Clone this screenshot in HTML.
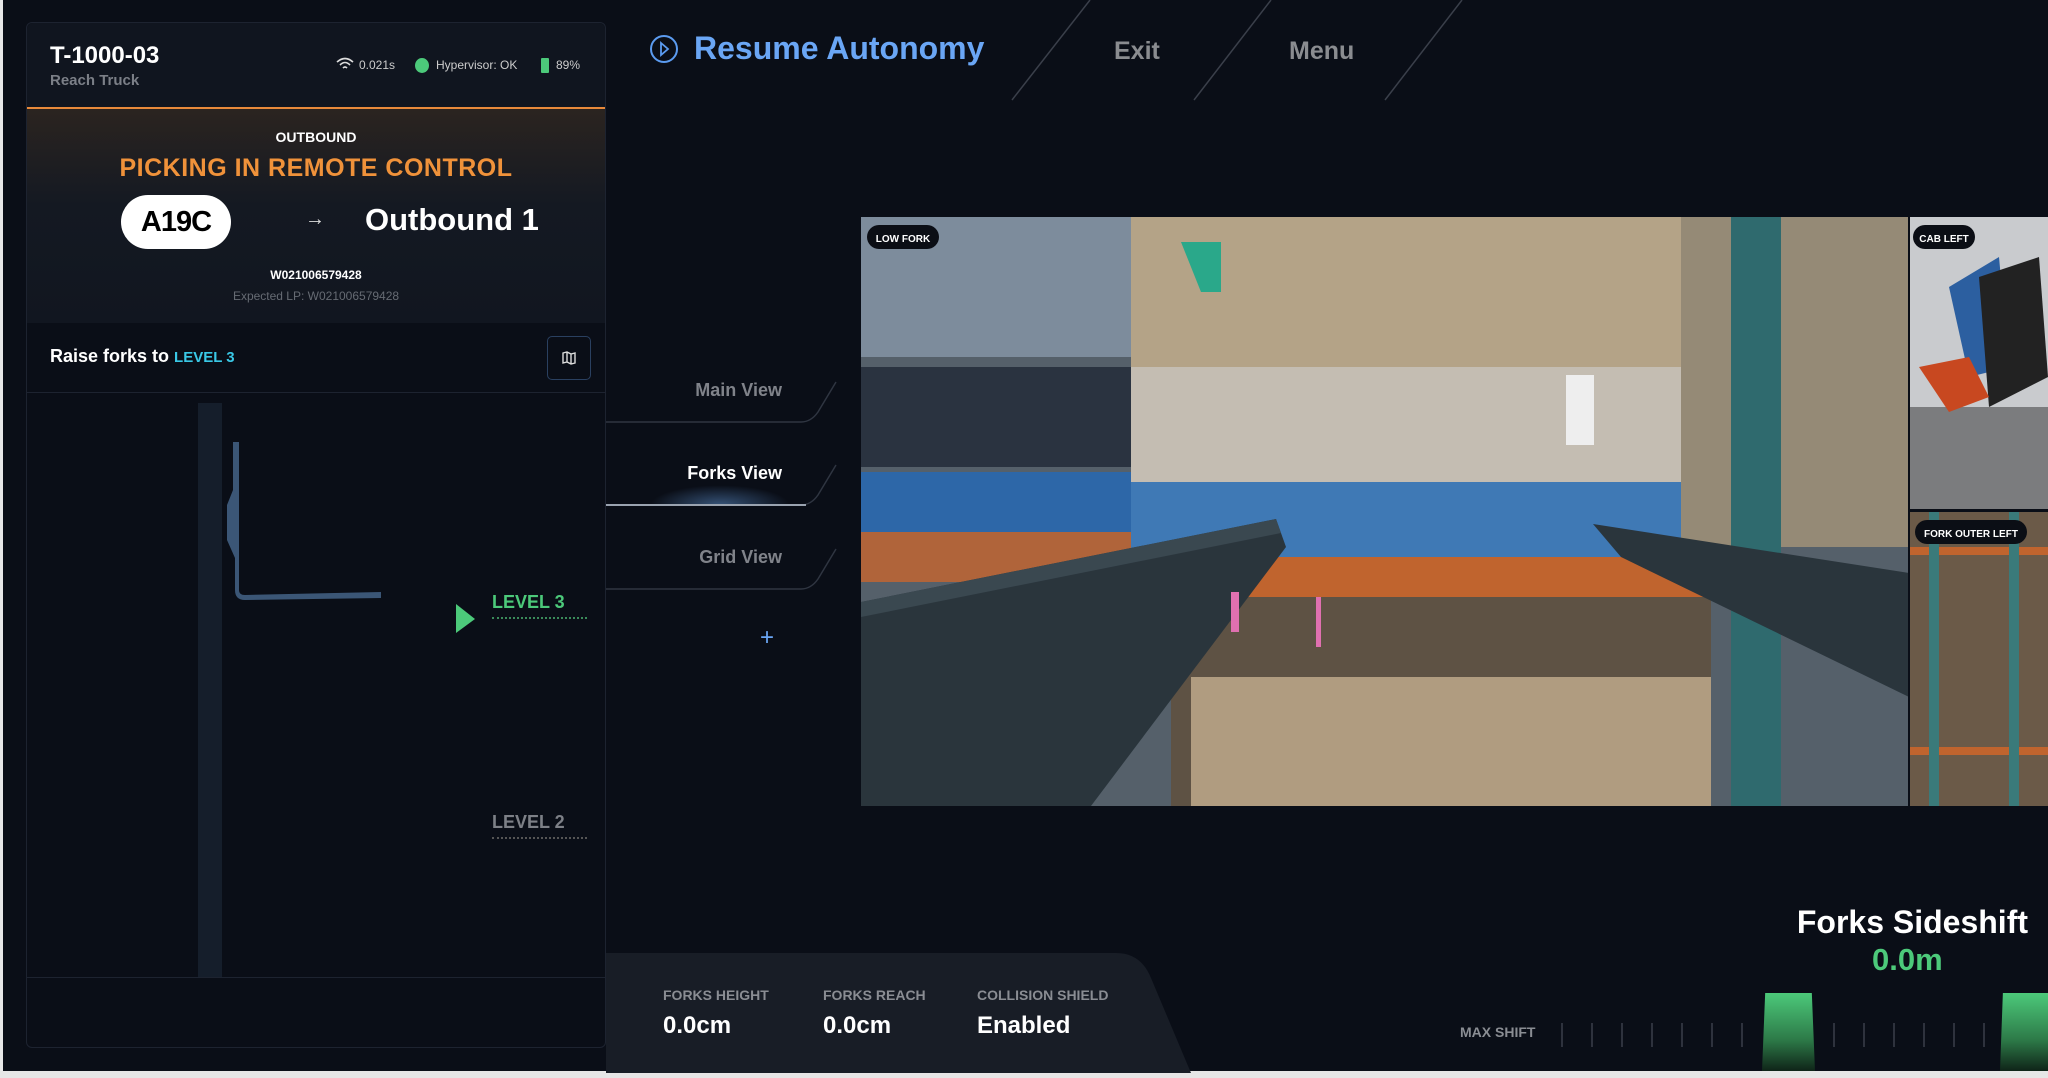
<!DOCTYPE html>
<html><head><meta charset="utf-8"><style>
*{margin:0;padding:0;box-sizing:border-box}
body{width:2048px;height:1078px;background:#0a0e17;font-family:"Liberation Sans",sans-serif;color:#fff;position:relative;overflow:hidden}
.a{position:absolute;white-space:nowrap}
.b{font-weight:bold}
</style></head><body>
<div class="a" style="left:0;top:0;width:3px;height:1078px;background:#e8e8e8"></div>
<div class="a" style="left:0;top:1071px;width:2048px;height:7px;background:#e6e6e6"></div>

<!-- left panel -->
<div class="a" style="left:26px;top:22px;width:580px;height:1026px;border:1px solid #1d2330;border-radius:6px;background:#0a0e17"></div>
<div class="a" style="left:27px;top:23px;width:578px;height:84px;background:#10151f;border-radius:6px 6px 0 0"></div>
<div class="a" style="left:27px;top:107px;width:578px;height:2px;background:#e8893a"></div>
<div class="a" style="left:27px;top:109px;width:578px;height:214px;background:linear-gradient(#2b2420,#141922 45%,#111620)"></div>
<div class="a b" style="left:50px;top:42px;font-size:24px">T-1000-03</div>
<div class="a b" style="left:50px;top:72px;font-size:15px;color:#7b7f87">Reach Truck</div>
<svg class="a" style="left:336px;top:57px" width="18" height="14" viewBox="0 0 18 14"><path d="M1 5Q9-2 17 5M4 8Q9 3 14 8M7 11Q9 9 11 11" stroke="#ddd" stroke-width="1.6" fill="none"/></svg>
<div class="a" style="left:359px;top:58px;font-size:12px;color:#ccc">0.021s</div>
<div class="a" style="left:415px;top:58px;width:14px;height:15px;border-radius:50%;background:#4cc97a"></div>
<div class="a" style="left:436px;top:58px;font-size:12px;color:#ccc">Hypervisor: OK</div>
<div class="a" style="left:541px;top:58px;width:8px;height:15px;background:#4cc97a;border-radius:1px"></div>
<div class="a" style="left:556px;top:58px;font-size:12px;color:#ccc">89%</div>

<div class="a b" style="left:27px;width:578px;top:129px;text-align:center;font-size:14px">OUTBOUND</div>
<div class="a b" style="left:27px;width:578px;top:154px;text-align:center;font-size:25px;letter-spacing:0.5px;color:#f0923a">PICKING IN REMOTE CONTROL</div>
<div class="a b" style="left:121px;top:195px;width:110px;height:54px;border-radius:27px;background:#fff;color:#000;font-size:29px;text-align:center;line-height:54px;letter-spacing:-1px">A19C</div>
<div class="a" style="left:305px;top:208px;font-size:20px;color:#ddd">→</div>
<div class="a b" style="left:365px;top:202px;font-size:31px">Outbound 1</div>
<div class="a b" style="left:27px;width:578px;top:268px;text-align:center;font-size:12px">W021006579428</div>
<div class="a" style="left:27px;width:578px;top:289px;text-align:center;font-size:12px;color:#666b73">Expected LP: W021006579428</div>

<div class="a b" style="left:50px;top:346px;font-size:18px">Raise forks to <span style="color:#39c8e6;font-size:15px">LEVEL 3</span></div>
<div class="a" style="left:547px;top:336px;width:44px;height:44px;border:1.5px solid #2a4060;border-radius:5px"></div>
<svg class="a" style="left:561px;top:350px" width="16" height="16" viewBox="0 0 16 16"><path d="M2 3L6 2L10 4L14 3V13L10 14L6 12L2 13Z M6 2V12 M10 4V14" stroke="#ddd" stroke-width="1.4" fill="none"/></svg>
<div class="a" style="left:27px;top:392px;width:578px;height:1px;background:#1d2330"></div>

<!-- chart -->
<div class="a" style="left:198px;top:403px;width:24px;height:575px;background:#151e2b"></div>
<svg class="a" style="left:220px;top:440px" width="170" height="170" viewBox="0 0 170 170"><path d="M13 2H19V150Q19 155 25 155L161 152V158L25 160Q15 160 15 150V118L7 100V65L13 50Z" fill="#3b5676"/></svg>
<div class="a" style="left:27px;top:977px;width:578px;height:1px;background:#1d2330"></div>
<svg class="a" style="left:456px;top:604px" width="20" height="30"><path d="M0 0L19 15L0 29Z" fill="#4cc97a"/></svg>
<div class="a b" style="left:492px;top:592px;font-size:18px;color:#4cc97a">LEVEL 3</div>
<div class="a" style="left:492px;top:617px;width:95px;border-top:2px dotted #3a8a5a"></div>
<div class="a b" style="left:492px;top:812px;font-size:18px;color:#7d8087">LEVEL 2</div>
<div class="a" style="left:492px;top:837px;width:95px;border-top:2px dotted #555"></div>

<!-- top nav -->
<svg class="a" style="left:649px;top:34px" width="30" height="30"><circle cx="15" cy="15" r="13" stroke="#5b9bf0" stroke-width="2" fill="none"/><path d="M12 9L19 15L12 21Z" stroke="#5b9bf0" stroke-width="1.8" fill="none"/></svg>
<div class="a b" style="left:694px;top:30px;font-size:32px;color:#6aa6f5">Resume Autonomy</div>
<svg class="a" style="left:1000px;top:0" width="480" height="105"><path d="M90 0L12 100M271 0L194 100M462 0L385 100" stroke="#3a3f4a" stroke-width="1.5"/></svg>
<div class="a b" style="left:1114px;top:37px;font-size:25px;color:#8a8c90">Exit</div>
<div class="a b" style="left:1289px;top:37px;font-size:25px;color:#8a8c90">Menu</div>

<!-- view tabs -->
<div class="a b" style="left:606px;width:176px;text-align:right;top:380px;font-size:18px;color:#80838a">Main View</div>
<div class="a b" style="left:606px;width:176px;text-align:right;top:463px;font-size:18px">Forks View</div>
<div class="a b" style="left:606px;width:176px;text-align:right;top:547px;font-size:18px;color:#80838a">Grid View</div>
<svg class="a" style="left:606px;top:360px" width="240" height="240"><path d="M0 62H195Q205 62 212 52L230 22M0 145H195Q205 145 212 135L230 105M0 229H195Q205 229 212 219L230 189" stroke="#2f3541" stroke-width="1.5" fill="none"/></svg>
<div class="a" style="left:650px;top:485px;width:140px;height:20px;background:radial-gradient(ellipse at 50% 100%,rgba(90,140,200,.55),transparent 70%)"></div>
<div class="a" style="left:606px;top:504px;width:200px;height:1.5px;background:#9aa3b0"></div>
<div class="a" style="left:760px;top:624px;font-size:24px;color:#6aa6f5">+</div>

<!-- video -->
<svg class="a" style="left:861px;top:217px" width="1048" height="589" viewBox="0 0 1048 589">
<rect width="1048" height="589" fill="#55606a"/>
<rect x="0" y="0" width="270" height="140" fill="#7d8c9c"/>
<rect x="0" y="150" width="270" height="100" fill="#2a3340"/>
<rect x="0" y="255" width="280" height="60" fill="#2d67a8"/>
<rect x="0" y="315" width="300" height="50" fill="#b0643a"/>
<rect x="270" y="0" width="550" height="300" fill="#b4a387"/>
<rect x="270" y="150" width="550" height="120" fill="#c4bdb2"/>
<path d="M320 25h40v50h-20z" fill="#2aa88a"/>
<rect x="705" y="158" width="28" height="70" fill="#eee"/>
<rect x="270" y="265" width="550" height="75" fill="#3f79b5"/>
<rect x="820" y="0" width="228" height="330" fill="#958a76"/>
<rect x="350" y="340" width="500" height="50" fill="#c0642e"/>
<rect x="310" y="380" width="540" height="209" fill="#5e5244"/>
<rect x="330" y="460" width="520" height="129" fill="#b09c80"/>
<rect x="870" y="0" width="50" height="589" fill="#2f6a6e"/>
<path d="M0 385L415 302L425 330L230 589H0Z" fill="#2a353c"/>
<path d="M0 385L415 302L420 316L0 400Z" fill="#3a4850"/>
<path d="M732 307L1048 356V480L760 340Z" fill="#2a353c"/>
<rect x="370" y="375" width="8" height="40" fill="#e070b0"/><rect x="455" y="380" width="5" height="50" fill="#e070b0"/>
<rect x="6" y="8" width="72" height="24" rx="12" fill="#0b0e15"/>
<text x="42" y="25" font-size="10" font-weight="bold" fill="#fff" text-anchor="middle" font-family="Liberation Sans">LOW FORK</text>
</svg>
<svg class="a" style="left:1909px;top:217px" width="139" height="589">
<rect width="139" height="292" fill="#c9cbce"/>
<rect x="0" y="190" width="139" height="102" fill="#7b7c7e"/>
<path d="M40 70L90 40L100 150L60 160Z" fill="#2c5fa0"/>
<path d="M70 60L130 40L139 160L80 190Z" fill="#222"/>
<path d="M10 150L60 140L80 180L40 195Z" fill="#c84820"/>
<rect x="0" y="295" width="139" height="294" fill="#6b5a48"/>
<rect x="0" y="330" width="139" height="8" fill="#c0642e"/>
<rect x="0" y="530" width="139" height="8" fill="#c0642e"/>
<rect x="20" y="295" width="10" height="294" fill="#3a7a7a"/>
<rect x="100" y="295" width="10" height="294" fill="#3a7a7a"/>
<rect x="4" y="8" width="62" height="24" rx="12" fill="#0b0e15"/>
<text x="35" y="25" font-size="10" font-weight="bold" fill="#fff" text-anchor="middle" font-family="Liberation Sans">CAB LEFT</text>
<rect x="6" y="303" width="112" height="24" rx="12" fill="#0b0e15"/>
<text x="62" y="320" font-size="10" font-weight="bold" fill="#fff" text-anchor="middle" font-family="Liberation Sans">FORK OUTER LEFT</text>
</svg>
<div class="a" style="left:1908px;top:217px;width:2px;height:589px;background:#0a0e17"></div>

<!-- bottom stats -->
<svg class="a" style="left:606px;top:953px" width="600" height="120"><path d="M0 0H510Q535 0 545 25L585 120H0Z" fill="#181d26"/></svg>
<div class="a b" style="left:663px;top:987px;font-size:14px;color:#8a8d93">FORKS HEIGHT</div>
<div class="a b" style="left:823px;top:987px;font-size:14px;color:#8a8d93">FORKS REACH</div>
<div class="a b" style="left:977px;top:987px;font-size:14px;color:#8a8d93">COLLISION SHIELD</div>
<div class="a b" style="left:663px;top:1012px;font-size:24px">0.0cm</div>
<div class="a b" style="left:823px;top:1012px;font-size:24px">0.0cm</div>
<div class="a b" style="left:977px;top:1012px;font-size:24px">Enabled</div>

<div class="a b" style="right:20px;top:904px;font-size:32px">Forks Sideshift</div>
<div class="a b" style="left:1872px;top:942px;font-size:31px;color:#4cc97a">0.0m</div>
<div class="a b" style="left:1460px;top:1024px;font-size:14px;color:#8a8d93">MAX SHIFT</div>
<svg class="a" style="left:1560px;top:1020px" width="440" height="30"><path d="M2 3V27M32 3V27M62 3V27M92 3V27M122 3V27M152 3V27M182 3V27M274 3V27M304 3V27M334 3V27M364 3V27M394 3V27M424 3V27" stroke="#3a3f4a" stroke-width="1.5"/></svg>
<div class="a" style="left:1762px;top:993px;width:53px;height:78px;background:linear-gradient(#4cc97a,#2d7a48 60%,#0f2418);clip-path:polygon(6% 0,94% 0,100% 100%,0 100%)"></div>
<div class="a" style="left:2000px;top:993px;width:48px;height:78px;background:linear-gradient(#4cc97a,#2d7a48 60%,#0f2418);clip-path:polygon(6% 0,100% 0,100% 100%,0 100%)"></div>
</body></html>
